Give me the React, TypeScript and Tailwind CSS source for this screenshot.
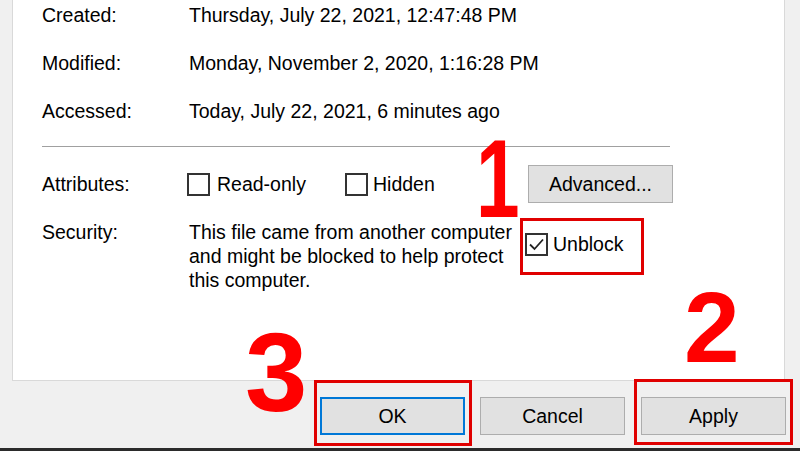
import React from "react";

function Box({ checked = false }: { checked?: boolean }) {
  return (
    <span className="flex h-[23px] w-[23px] flex-shrink-0 items-center justify-center border-2 border-[#333] bg-white">
      {checked && (
        <svg width="17" height="17" viewBox="0 0 17 17" fill="none">
          <path d="M2 8.5 L6.5 13 L15 3.5" stroke="#222" strokeWidth="1.8" />
        </svg>
      )}
    </span>
  );
}

function Btn({ label, focused = false }: { label: string; focused?: boolean }) {
  return (
    <div
      className={
        focused
          ? "flex h-[38px] w-[145px] items-center justify-center border-2 border-[#0078d7] bg-[#e1e1e1] text-black"
          : "flex h-[38px] w-[145px] items-center justify-center border border-[#adadad] bg-[#e1e1e1] text-black"
      }
    >
      {label}
    </div>
  );
}

const rows = [
  { label: "Created:", value: "Thursday, July 22, 2021, 12:47:48 PM" },
  { label: "Modified:", value: "Monday, November 2, 2020, 1:16:28 PM" },
  { label: "Accessed:", value: "Today, July 22, 2021, 6 minutes ago" },
];

export default function App() {
  return (
    <div
      className="relative flex h-[451px] w-[800px] flex-col overflow-hidden border-b-[3px] border-[#2b2b2b] bg-[#f0f0f0] text-[19.5px] leading-[24px] text-black"
      style={{ fontFamily: '"Liberation Sans", Arial, sans-serif' }}
    >
      {/* white details panel */}
      <div className="ml-[12px] h-[381px] w-[773px] border-x border-b border-[#d9d9d9] bg-white pl-[29px] pt-[3px]">
        <div className="flex flex-col gap-[24px]">
          {rows.map((r) => (
            <div key={r.label} className="flex">
              <span className="w-[147px]">{r.label}</span>
              <span>{r.value}</span>
            </div>
          ))}
        </div>

        <div className="mt-[23px] h-px w-[628px] bg-[#a0a0a0]" />

        <div className="mt-[18px] flex h-[38px] items-center">
          <span className="w-[145px]">Attributes:</span>
          <Box />
          <span className="ml-[7px] w-[128px]">Read-only</span>
          <Box />
          <span className="ml-[5px] w-[155px]">Hidden</span>
          <div className="flex h-[38px] w-[145px] items-center justify-center border border-[#adadad] bg-[#e1e1e1]">
            Advanced...
          </div>
        </div>

        <div className="mt-[17px] flex">
          <span className="w-[147px]">Security:</span>
          <p className="w-[336px]">
            This file came from another computer and might be blocked to help protect this computer.
          </p>
          <div className="mt-[12px] flex h-[24px] items-center">
            <Box checked />
            <span className="ml-[5px]">Unblock</span>
          </div>
        </div>
      </div>

      {/* buttons */}
      <div className="mt-[16px] flex justify-end gap-[15px] pr-[14px]">
        <Btn label="OK" focused />
        <Btn label="Cancel" />
        <div className="ml-px">
          <Btn label="Apply" />
        </div>
      </div>

      {/* red annotations */}
      <div className="absolute left-[520px] top-[218px] h-[57px] w-[124px] border-[3px] border-[#e00000]" />
      <div className="absolute left-[314px] top-[380px] h-[66px] w-[158px] border-[3px] border-[#e00000]" />
      <div className="absolute left-[634px] top-[379px] h-[66px] w-[159px] border-[3px] border-[#e00000]" />
      <span className="absolute left-[476px] top-[139px] origin-top-left scale-x-[0.7] text-[112px] font-bold leading-[0.72] text-[#ff0000]">1</span>
      <span className="absolute left-[684px] top-[277px] text-[100px] font-bold leading-none text-[#ff0000]">2</span>
      <span className="absolute left-[245px] top-[317px] text-[112px] font-bold leading-none text-[#ff0000]">3</span>
    </div>
  );
}
